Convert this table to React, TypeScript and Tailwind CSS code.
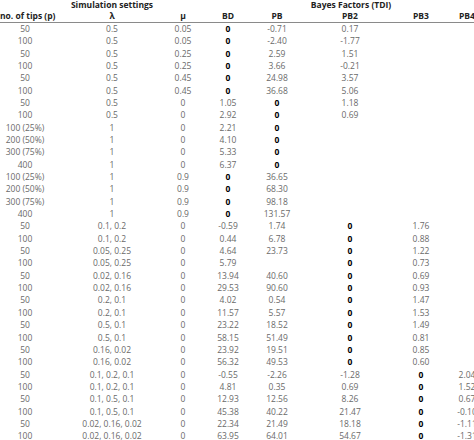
const cols = [
  "w-[50px]",
  "ml-[27px] w-[70px]",
  "ml-[18px] w-[36px]",
  "ml-[7px] w-[40px]",
  "ml-[4px] w-[50px]",
  "ml-[18px] w-[60px]",
  "ml-[16px] w-[50px]",
  "ml-[1px] w-[40px]",
];

const heads = ["λ", "μ", "BD", "PB", "PB2", "PB3", "PB4"];

// "B" marks a bold zero
const rows: string[][] = [
  ["50", "0.5", "0.05", "B", "-0.71", "0.17"],
  ["100", "0.5", "0.05", "B", "-2.40", "-1.77"],
  ["50", "0.5", "0.25", "B", "2.59", "1.51"],
  ["100", "0.5", "0.25", "B", "3.66", "-0.21"],
  ["50", "0.5", "0.45", "B", "24.98", "3.57"],
  ["100", "0.5", "0.45", "B", "36.68", "5.06"],
  ["50", "0.5", "0", "1.05", "B", "1.18"],
  ["100", "0.5", "0", "2.92", "B", "0.69"],
  ["100 (25%)", "1", "0", "2.21", "B"],
  ["200 (50%)", "1", "0", "4.10", "B"],
  ["300 (75%)", "1", "0", "5.33", "B"],
  ["400", "1", "0", "6.37", "B"],
  ["100 (25%)", "1", "0.9", "B", "36.65"],
  ["200 (50%)", "1", "0.9", "B", "68.30"],
  ["300 (75%)", "1", "0.9", "B", "98.18"],
  ["400", "1", "0.9", "B", "131.57"],
  ["50", "0.1, 0.2", "0", "-0.59", "1.74", "B", "1.76"],
  ["100", "0.1, 0.2", "0", "0.44", "6.78", "B", "0.88"],
  ["50", "0.05, 0.25", "0", "4.64", "23.73", "B", "1.22"],
  ["100", "0.05, 0.25", "0", "5.79", "", "B", "0.73"],
  ["50", "0.02, 0.16", "0", "13.94", "40.60", "B", "0.69"],
  ["100", "0.02, 0.16", "0", "29.53", "90.60", "B", "0.93"],
  ["50", "0.2, 0.1", "0", "4.02", "0.54", "B", "1.47"],
  ["100", "0.2, 0.1", "0", "11.57", "5.57", "B", "1.53"],
  ["50", "0.5, 0.1", "0", "23.22", "18.52", "B", "1.49"],
  ["100", "0.5, 0.1", "0", "58.15", "51.49", "B", "0.81"],
  ["50", "0.16, 0.02", "0", "23.92", "19.51", "B", "0.85"],
  ["100", "0.16, 0.02", "0", "56.32", "49.53", "B", "0.60"],
  ["50", "0.1, 0.2, 0.1", "0", "-0.55", "-2.26", "-1.28", "B", "2.04"],
  ["100", "0.1, 0.2, 0.1", "0", "4.81", "0.35", "0.69", "B", "1.52"],
  ["50", "0.1, 0.5, 0.1", "0", "12.93", "12.56", "8.26", "B", "0.67"],
  ["100", "0.1, 0.5, 0.1", "0", "45.38", "40.22", "21.47", "B", "-0.10"],
  ["50", "0.02, 0.16, 0.02", "0", "22.34", "21.49", "18.18", "B", "-1.11"],
  ["100", "0.02, 0.16, 0.02", "0", "63.95", "64.01", "54.67", "B", "-1.31"],
];

export default function App() {
  return (
    <div
      className="h-[440px] w-[474px] overflow-hidden bg-white text-[8.5px] leading-none"
      style={{ fontFamily: '"Open Sans", sans-serif' }}
    >
      <div className="w-[500px]">
        {/* group headers */}
        <div className="flex h-[10px] items-center font-bold text-[#222]">
          <div className="w-[224px] text-center">Simulation settings</div>
          <div className="ml-[56px] w-[142px] text-center">Bayes Factors (TDI)</div>
        </div>

        <div className="flex h-[12px] items-center font-bold text-[#222]">
          <div className="w-[50px] whitespace-nowrap text-left">no. of tips (p)</div>
          {heads.map((h, i) => (
            <div key={h} className={`${cols[i + 1]} shrink-0 text-center`}>
              {h}
            </div>
          ))}
        </div>

        <div className="h-px bg-[#8a8a8a]" />

        {rows.map((r, ri) => (
          <div key={ri} className="flex h-[12.355px] items-center">
            {cols.map((c, ci) => {
              const v = r[ci] ?? "";
              return (
                <div
                  key={ci}
                  className={`${c} shrink-0 whitespace-nowrap text-center ${
                    v === "B" ? "font-bold text-black" : "text-[#6a6a6a]"
                  }`}
                >
                  {v === "B" ? "0" : v}
                </div>
              );
            })}
          </div>
        ))}
      </div>
    </div>
  );
}
